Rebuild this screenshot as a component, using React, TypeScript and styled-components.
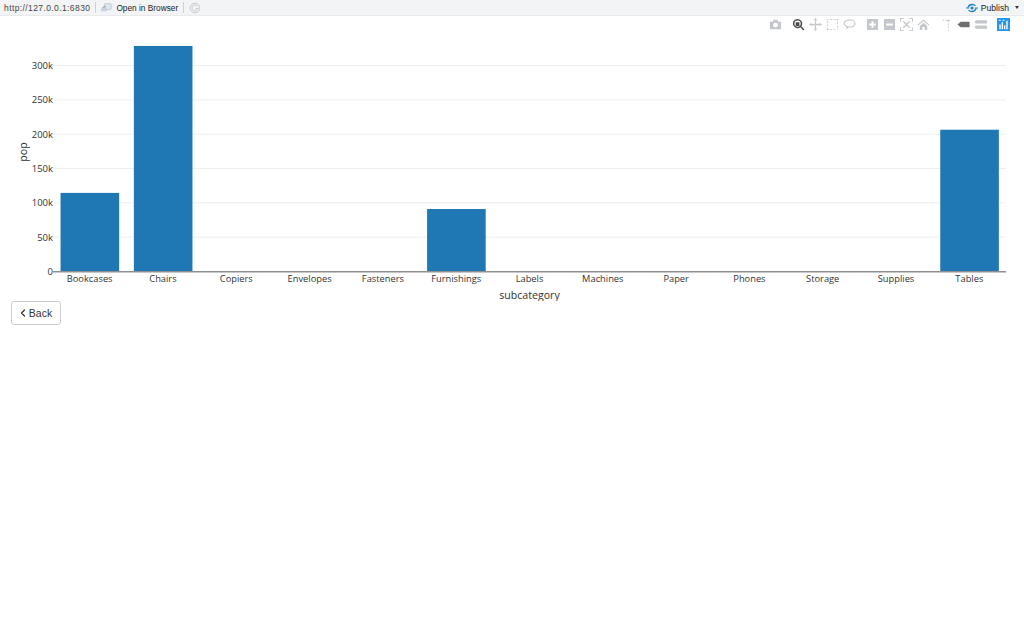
import styled, { createGlobalStyle } from 'styled-components';
import { ChevronLeft } from 'lucide-react';

const GlobalStyle = createGlobalStyle`
  html, body {
    margin: 0;
    padding: 0;
    background: #ffffff;
    font-family: 'Open Sans', 'Liberation Sans', sans-serif;
  }
`;

const Page = styled.div`
  width: 1024px;
  height: 640px;
  overflow: hidden;
  background: #ffffff;
`;

const TopBar = styled.div`
  display: flex;
  align-items: center;
  height: 15px;
  background: #f3f4f6;
  border-bottom: 1px solid #e9eaec;
  font-family: 'Liberation Sans', sans-serif;
  font-size: 9px;
  color: #222;
`;

const Address = styled.span`
  padding-left: 4px;
  color: #444;
  font-size: 8.5px;
  letter-spacing: 0.4px;
`;

const Divider = styled.span`
  width: 1px;
  height: 11px;
  margin: 0 5px 0 5px;
  background: #cfd1d4;
`;

const OpenLink = styled.span`
  display: flex;
  align-items: center;
  gap: 4px;
  color: #1c1c1c;
  font-size: 8.3px;
`;

const PublishGroup = styled.div`
  display: flex;
  align-items: center;
  gap: 3px;
  margin-left: auto;
  padding-right: 5px;
  font-size: 8.6px;
  color: #222;
`;

const Caret = styled.span`
  width: 0;
  height: 0;
  margin-left: 3px;
  border-left: 2.5px solid transparent;
  border-right: 2.5px solid transparent;
  border-top: 3px solid #333;
`;

const ChartArea = styled.div`
  position: relative;
  height: 285px;
`;

const ModeBar = styled.div`
  position: absolute;
  top: 2px;
  right: 14px;
  display: flex;
  align-items: center;
`;

const ModeGroup = styled.div`
  display: flex;
  align-items: center;
  gap: 4px;
  margin-left: 10px;
`;

const toneColors = {
  muted: '#c4c8cc',
  active: '#4a4a4a',
  dark: '#6f6f6f',
  brand: '#2196f3',
};

const ModeIcon = styled.svg<{ $tone?: keyof typeof toneColors }>`
  width: 13px;
  height: 13px;
  display: block;
  color: ${(p) => toneColors[p.$tone ?? 'muted']};
  fill: currentColor;
`;

const PlotSvg = styled.svg`
  display: block;
  font-family: 'Open Sans', 'Liberation Sans', sans-serif;
`;

const BackRow = styled.div`
  padding-left: 11px;
`;

const BackButton = styled.button`
  display: flex;
  align-items: center;
  justify-content: center;
  gap: 0;
  box-sizing: border-box;
  width: 50px;
  height: 24px;
  padding: 0 3px 0 0;
  background: #ffffff;
  border: 1px solid #cccccc;
  border-radius: 3px;
  color: #333333;
  font-family: 'Liberation Sans', sans-serif;
  font-size: 10.5px;
`;

const categories = [
  { name: 'Bookcases', value: 114500 },
  { name: 'Chairs', value: 328500 },
  { name: 'Copiers', value: 0 },
  { name: 'Envelopes', value: 0 },
  { name: 'Fasteners', value: 0 },
  { name: 'Furnishings', value: 91000 },
  { name: 'Labels', value: 0 },
  { name: 'Machines', value: 0 },
  { name: 'Paper', value: 0 },
  { name: 'Phones', value: 0 },
  { name: 'Storage', value: 0 },
  { name: 'Supplies', value: 0 },
  { name: 'Tables', value: 206500 },
];

const ticks = ['0', '50k', '100k', '150k', '200k', '250k', '300k'];

// plot geometry, y measured from the top of the svg (which starts at y=16)
const plotLeft = 53;
const plotRight = 1006;
const baseY = 255.5;
const step = (plotRight - plotLeft) / categories.length;
const barWidth = 58.6;
const textColor = '#333';
const yFor = (v: number) => baseY - (v / 50000) * 34.33;

const Plot = () => (
  <PlotSvg width={1024} height={285}>
    {ticks.slice(1).map((t, i) => (
      <line key={t} x1={plotLeft} x2={plotRight} y1={yFor((i + 1) * 50000)} y2={yFor((i + 1) * 50000)} stroke="#eeeeee" />
    ))}
    {categories
      .filter((c) => c.value > 0)
      .map((c) => {
        const i = categories.indexOf(c);
        return (
          <rect
            key={c.name}
            x={plotLeft + step * i + (step - barWidth) / 2 + 0.2}
            y={yFor(c.value)}
            width={barWidth}
            height={baseY - yFor(c.value)}
            fill="#1f77b4"
          />
        );
      })}
    <line x1={plotLeft} x2={plotRight} y1={baseY + 0.3} y2={baseY + 0.3} stroke="#8f8f8f" strokeWidth={1.6} />
    {ticks.map((t, i) => (
      <text key={t} x={53} y={yFor(i * 50000) + 3.5} textAnchor="end" fontSize={9.5} fill={textColor}>
        {t}
      </text>
    ))}
    {categories.map((c, i) => (
      <text key={c.name} x={plotLeft + step * (i + 0.5)} y={266} textAnchor="middle" fontSize={9.3} fill={textColor}>
        {c.name}
      </text>
    ))}
    <text x={529.5} y={283} textAnchor="middle" fontSize={10.6} fill={textColor}>
      subcategory
    </text>
    <text transform="translate(27 136) rotate(-90)" textAnchor="middle" fontSize={10.6} fill={textColor}>
      pop
    </text>
  </PlotSvg>
);

const Toolbar = () => (
  <ModeBar>
    <ModeGroup>
      <ModeIcon viewBox="0 0 14 14">
        <path d="M1 4h3l1-2h4l1 2h3v8H1zM7 5a2.600 2.600 0 1 0 0 5.200A2.600 2.600 0 0 0 7 5z" fillRule="evenodd" />
      </ModeIcon>
    </ModeGroup>
    <ModeGroup>
      <ModeIcon $tone="active" viewBox="0 0 14 14">
        <path d="M6 1a5 5 0 0 1 4 8l3.400 3.300-1.200 1.200L9 10a5 5 0 1 1-3-9zm0 1.600a3.400 3.400 0 1 0 0 6.800 3.400 3.400 0 0 0 0-6.800zM4 4.500h4v4H4z" fillRule="evenodd" />
      </ModeIcon>
      <ModeIcon viewBox="0 0 14 14">
        <path d="M7 0l2 2.400H7.600v3.900h3.900V5L14 7l-2.500 2V7.700H7.600v3.900H9L7 14l-2-2.400h1.400V7.700H2.500V9L0 7l2.500-2v1.300h3.900V2.400H5z" />
      </ModeIcon>
      <ModeIcon viewBox="0 0 14 14">
        <path d="M1 1h2v1H1zM4.500 1h2v1h-2zM8 1h2v1H8zM11 1h2v2h-1V2h-1zM1 3.500h1v2H1zM12 4.500h1v2h-1zM1 7h1v2H1zM12 8h1v2h-1zM1 10.500h1V12h1v1H1zM4.500 12h2v1h-2zM8 12h2v1H8zM11 12h2v-1h-1v1h-1z" />
      </ModeIcon>
      <ModeIcon viewBox="0 0 14 14">
        <path d="M7.500 1.500c3.300 0 6 1.900 6 4.400s-2.700 4.400-6 4.400c-.7 0-1.300-.1-1.900-.2L4 13l-.5-3.700C1.600 8.500.5 7.300.5 5.900c0-2.500 3-4.400 7-4.400zm0 1.200C4.300 2.700 1.800 4.100 1.800 5.900s2.500 3.200 5.700 3.200 4.800-1.400 4.800-3.200-1.600-3.200-4.800-3.200z" fillRule="evenodd" />
      </ModeIcon>
    </ModeGroup>
    <ModeGroup>
      <ModeIcon viewBox="0 0 14 14">
        <path d="M2 1h10a1 1 0 0 1 1 1v10a1 1 0 0 1-1 1H2a1 1 0 0 1-1-1V2a1 1 0 0 1 1-1zm4 2.500V6H3.500v2H6v2.500h2V8h2.500V6H8V3.500z" fillRule="evenodd" />
      </ModeIcon>
      <ModeIcon viewBox="0 0 14 14">
        <path d="M2 1h10a1 1 0 0 1 1 1v10a1 1 0 0 1-1 1H2a1 1 0 0 1-1-1V2a1 1 0 0 1 1-1zm1.500 5v2h7V6z" fillRule="evenodd" />
      </ModeIcon>
      <ModeIcon viewBox="0 0 14 14">
        <path d="M0 0h4v1H1v3H0zM10 0h4v4h-1V1h-3zM0 10h1v3h3v1H0zM13 10h1v4h-4v-1h3zM4 3l3 3 3-3 1 1-3 3 3 3-1 1-3-3-3 3-1-1 3-3-3-3z" />
      </ModeIcon>
      <ModeIcon viewBox="0 0 14 14">
        <path d="M7 1.500l6.500 5.800-.8.800L7 3.200 1.300 8.100l-.8-.8zM3 8.500l4-3.400 4 3.400V13H8.300V9.800H5.700V13H3z" />
      </ModeIcon>
    </ModeGroup>
    <ModeGroup>
      <ModeIcon viewBox="0 0 14 14">
        <path d="M3 2h1.500v1H3zM6 2h5v1H9.500v1.500h-1V3H6zM8.500 6h1v1.500h-1zM8.500 9h1v1.500h-1zM8.500 12h1v1.500h-1z" />
      </ModeIcon>
      <ModeIcon $tone="dark" viewBox="0 0 14 14">
        <path d="M0.500 7L4 4h9.500v6H4z" />
      </ModeIcon>
      <ModeIcon viewBox="0 0 14 14">
        <path d="M2 2.500h12V6H2L0.500 4.200zM2 8h12v3.500H2L0.500 9.700z" />
      </ModeIcon>
    </ModeGroup>
    <ModeGroup>
      <ModeIcon $tone="brand" viewBox="0 0 14 14">
        <path d="M0 0h14v14H0zM2.500 7v5h1.500V7zM5 4.500V12h1.500V4.500zM7.500 8v4H9V8zM10 3v9h1.500V3zM2 2v1h2V2zM6 2v1h2V2z" fillRule="evenodd" />
      </ModeIcon>
    </ModeGroup>
  </ModeBar>
);

export default function App() {
  return (
    <Page>
      <GlobalStyle />
      <TopBar>
        <Address>http://127.0.0.1:6830</Address>
        <Divider />
        <OpenLink>
          <svg width="11" height="11" viewBox="0 0 13 11">
            <rect x="4" y="1" width="8" height="7" rx="1" fill="#dfe6ee" stroke="#aeb8c2" strokeWidth="0.8" />
            <path d="M1 9.500c0-3 1.500-5 5-5" fill="none" stroke="#9fb0c0" strokeWidth="1.300" />
            <rect x="1" y="6" width="6" height="4" fill="#c9d3dd" />
          </svg>
          Open in Browser
        </OpenLink>
        <Divider />
        <svg width="12" height="12" viewBox="0 0 12 12">
          <circle cx="6" cy="6" r="4.800" fill="none" stroke="#c3cbd2" strokeWidth="1" />
          <path d="M8.500 4.200A3 3 0 1 0 9 6.500H6.500" fill="none" stroke="#c3cbd2" strokeWidth="1" />
        </svg>
        <PublishGroup>
          <svg width="12" height="10" viewBox="0 0 13 10">
            <path d="M2 4.500C3 2.300 4.600 1.200 6.500 1.200c1.500 0 2.700.5 3.700 1.500" fill="none" stroke="#1a80c4" strokeWidth="1.500" />
            <path d="M11 5.500C10 7.700 8.400 8.800 6.500 8.800c-1.500 0-2.700-.5-3.700-1.500" fill="none" stroke="#1a80c4" strokeWidth="1.500" />
            <circle cx="6.500" cy="5" r="1.700" fill="#1a80c4" />
            <path d="M0 5h3.500M9.500 5H13" stroke="#1a80c4" strokeWidth="1.300" />
          </svg>
          Publish
          <Caret />
        </PublishGroup>
      </TopBar>
      <ChartArea>
        <Toolbar />
        <Plot />
      </ChartArea>
      <BackRow>
        <BackButton>
          <ChevronLeft size={12} strokeWidth={2.6} />
          Back
        </BackButton>
      </BackRow>
    </Page>
  );
}
